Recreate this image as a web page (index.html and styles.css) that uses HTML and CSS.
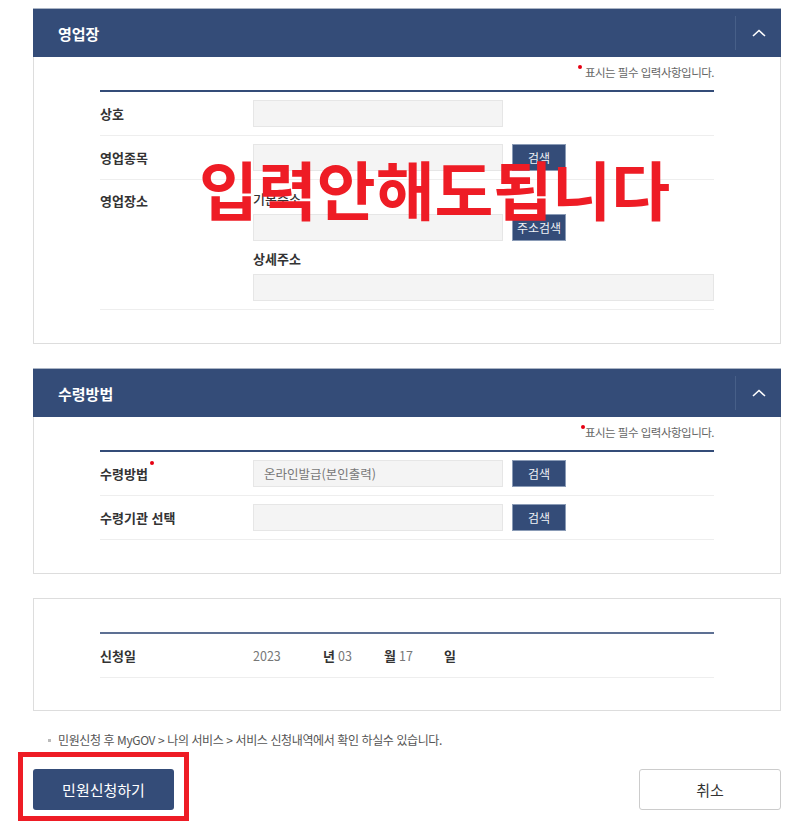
FILE: index.html
```html
<!DOCTYPE html>
<html lang="ko">
<head>
    <meta charset="UTF-8">
    <meta name="viewport" content="width=device-width, initial-scale=1.0">
    <title>민원신청</title>
    <link rel="stylesheet" href="styles.css">
</head>
<body>
    <div class="wrap">
        <div class="section">
            <div class="sec-head">
                <h3>영업장</h3>
                <button class="toggle" type="button">
                    <svg width="14" height="8" viewBox="0 0 14 8"><polyline points="1,7 7,1.5 13,7" fill="none" stroke="#fff" stroke-width="1.6"/></svg>
                </button>
            </div>
            <div class="sec-body">
                <p class="req-note"><span class="dot"></span> 표시는 필수 입력사항입니다.</p>
                <div class="form">
                    <div class="row">
                        <div class="label">상호</div>
                        <div class="field"><input class="inp" type="text"></div>
                    </div>
                    <div class="row">
                        <div class="label">영업종목</div>
                        <div class="field"><input class="inp" type="text"><button class="btn-s" type="button">검색</button></div>
                    </div>
                    <div class="row row-addr">
                        <div class="label">영업장소</div>
                        <div class="field-col">
                            <div class="sublabel thin">기본주소</div>
                            <div class="field"><input class="inp" type="text"><button class="btn-s" type="button">주소검색</button></div>
                            <div class="sublabel">상세주소</div>
                            <input class="inp inp-wide" type="text">
                        </div>
                    </div>
                </div>
                <div class="stamp">입력안해도됩니다</div>
            </div>
        </div>

        <div class="section">
            <div class="sec-head">
                <h3>수령방법</h3>
                <button class="toggle" type="button">
                    <svg width="14" height="8" viewBox="0 0 14 8"><polyline points="1,7 7,1.5 13,7" fill="none" stroke="#fff" stroke-width="1.6"/></svg>
                </button>
            </div>
            <div class="sec-body">
                <p class="req-note"><span class="dot"></span>표시는 필수 입력사항입니다.</p>
                <div class="form">
                    <div class="row">
                        <div class="label">수령방법<span class="dot dot-label"></span></div>
                        <div class="field"><input class="inp" type="text" value="온라인발급(본인출력)"><button class="btn-s" type="button">검색</button></div>
                    </div>
                    <div class="row">
                        <div class="label">수령기관 선택</div>
                        <div class="field"><input class="inp" type="text"><button class="btn-s" type="button">검색</button></div>
                    </div>
                </div>
            </div>
        </div>

        <div class="section section-date">
            <div class="form form-date">
                <div class="row">
                    <div class="label">신청일</div>
                    <div class="date">
                        <span class="d-val d-year">2023</span>
                        <b>년</b><span class="d-val d-mon">03</span>
                        <b>월</b><span class="d-val d-day">17</span>
                        <b>일</b>
                    </div>
                </div>
            </div>
        </div>

        <p class="info">민원신청 후 MyGOV &gt; 나의 서비스 &gt; 서비스 신청내역에서 확인 하실수 있습니다.</p>

        <div class="actions">
            <div class="mark">
                <button class="btn-main" type="button">민원신청하기</button>
            </div>
            <button class="btn-cancel" type="button">취소</button>
        </div>
    </div>
</body>
</html>
```

FILE: styles.css
```css
body {
    margin: 0;
    font-family: "Noto Sans CJK KR", "Noto Sans", sans-serif;
    color: #333;
    background: #fff;
}
.wrap {
    width: 748px;
    margin: 8px 0 0 33px;
}
.section {
    margin-bottom: 24px;
}
.sec-head {
    height: 48px;
    display: flex;
    align-items: center;
    justify-content: space-between;
    background-color: #344c78;
    border-top: 1px solid #aab4c4;
}
.sec-head h3 {
    margin: 0 0 0 25px;
    font-size: 15px;
    font-weight: 700;
    color: #fff;
}
.toggle {
    width: 46px;
    height: 34px;
    padding: 0;
    border: none;
    border-left: 1px solid #475f88;
    background: none;
    display: flex;
    align-items: center;
    justify-content: center;
}
.sec-body {
    position: relative;
    border: 1px solid #ddd;
    border-top: none;
    padding: 0 66px 33px;
}
.req-note {
    margin: 0;
    padding: 7px 0 9px;
    text-align: right;
    font-size: 11.5px;
    line-height: 17px;
    color: #666;
    letter-spacing: -0.5px;
}
.dot {
    display: inline-block;
    width: 4px;
    height: 4px;
    border-radius: 50%;
    background: #e60012;
    vertical-align: top;
    margin-top: 1px;
}
.dot-label {
    margin: -3px 0 0 2px;
}
.form {
    border-top: 2px solid #344c78;
}
.row {
    display: flex;
    align-items: center;
    min-height: 43px;
    border-bottom: 1px solid #eee;
}
.label {
    width: 153px;
    font-size: 13px;
    font-weight: 700;
    color: #333;
    flex-shrink: 0;
}
.field {
    display: flex;
    align-items: center;
    gap: 9px;
}
.inp {
    box-sizing: border-box;
    width: 250px;
    height: 27px;
    margin: 0;
    padding: 0 10px;
    border: 1px solid #e6e6e6;
    background: #f4f4f4;
    font-family: inherit;
    font-size: 12.5px;
    color: #777;
}
.inp-wide {
    width: 461px;
}
.btn-s {
    width: 54px;
    height: 27px;
    padding: 0;
    border: 1px solid #8a9bb6;
    background: #344c78;
    color: #f0f2f6;
    font-family: inherit;
    font-size: 12px;
}
.row-addr {
    align-items: flex-start;
    padding: 10px 0 8px;
}
.row-addr .label {
    padding-top: 1px;
}
.field-col {
    display: flex;
    flex-direction: column;
}
.sublabel {
    font-size: 13px;
    font-weight: 700;
    line-height: 18px;
    margin: 9px 0 6px;
}
.sublabel.thin {
    font-weight: 500;
    margin: 0 0 6px;
}
.stamp {
    position: absolute;
    left: 165px;
    top: 98px;
    font-size: 64px;
    font-weight: 700;
    line-height: 1;
    letter-spacing: 0;
    color: #ee1c25;
    white-space: nowrap;
}
.section-date {
    border: 1px solid #ddd;
    padding: 33px 66px 32px;
    margin-top: 24px;
    margin-bottom: 0;
}
.form-date {
    border-top: 2px solid #5d7093;
}
.date {
    display: flex;
    align-items: center;
    font-size: 12.5px;
}
.date b {
    font-size: 13px;
    font-weight: 700;
    color: #333;
}
.d-val {
    color: #777;
}
.d-year {
    width: 70px;
}
.d-mon {
    width: 46px;
    margin-left: 3px;
}
.d-day {
    width: 45px;
    margin-left: 3px;
}
.info {
    margin: 20px 0 0 15px;
    font-size: 12px;
    line-height: 18px;
    color: #555;
    letter-spacing: -0.4px;
}
.info::before {
    content: "";
    display: inline-block;
    width: 3px;
    height: 3px;
    background: #bbb;
    vertical-align: middle;
    margin: -2px 7px 0 0;
}
.actions {
    display: flex;
    justify-content: space-between;
    align-items: flex-start;
    margin-top: 3px;
}
.mark {
    margin-left: -15px;
    padding: 12px 10px 6px 10px;
    border: 5px solid #ee1c25;
}
.btn-main {
    display: block;
    width: 141px;
    height: 41px;
    border: none;
    border-radius: 3px;
    background: #344c78;
    color: #fff;
    font-family: inherit;
    font-size: 15px;
}
.btn-cancel {
    width: 142px;
    height: 41px;
    margin-top: 17px;
    border: 1px solid #ccc;
    border-radius: 3px;
    background: #fff;
    color: #333;
    font-family: inherit;
    font-size: 15px;
}
```
